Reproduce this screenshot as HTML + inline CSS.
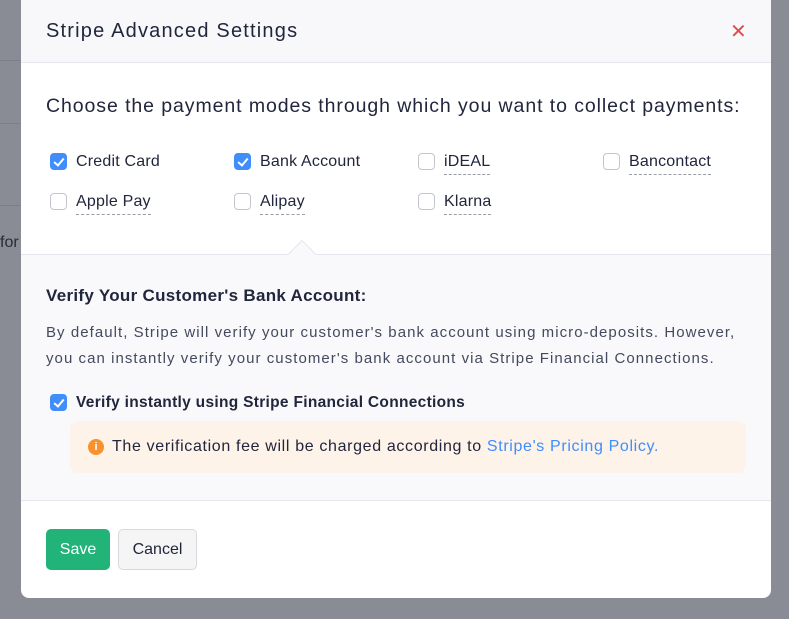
<!DOCTYPE html>
<html><head><style>
*{box-sizing:border-box;margin:0;padding:0}
body{width:789px;height:619px;background:#8a8c95;font-family:"Liberation Sans",sans-serif;position:relative;overflow:hidden;color:#21263c}
.bgl{position:absolute;left:0;width:21px;height:1px;background:#7d7f88}
.modal{position:absolute;left:21px;top:-8px;width:750px;height:606px;background:#fff;border-radius:8px;overflow:hidden}
.hdr{height:71px;background:#f8f8fb;border-bottom:1px solid #e6e7ee;position:relative}
.hdr h1{position:absolute;left:25px;top:28px;font-size:20px;font-weight:normal;color:#21263c;letter-spacing:1.2px}
.x{position:absolute;left:709px;top:27px;color:#e54b4b;font-size:20px}
.q{position:absolute;left:25px;top:103px;font-size:19.5px;letter-spacing:0.92px}
.opt{position:absolute;font-size:16px;height:22px;letter-spacing:0.2px}
.cb{position:absolute;left:0;top:0px;width:17px;height:17px;border:1px solid #c4c6cf;border-radius:4px;background:#fff}
.cb.on{background:#408dfb;border-color:#408dfb}
.cb.on:after{content:"";position:absolute;left:5px;top:2px;width:4px;height:8px;border:solid #fff;border-width:0 2px 2px 0;transform:rotate(40deg)}
.lbl{position:absolute;left:26px;top:0;white-space:nowrap}
.dash{border-bottom:1px dashed #9a9ca6;padding-bottom:3px}
.sec{position:absolute;left:0;top:262px;width:750px;height:247px;background:#f9f9fb;border-top:1px solid #e6e7ee;border-bottom:1px solid #e6e7ee}
.arrow{position:absolute;left:271px;top:-11px;width:20px;height:20px;background:#f9f9fb;border-left:1px solid #e6e7ee;border-top:1px solid #e6e7ee;transform:rotate(45deg)}
.sec h2{position:absolute;left:25px;top:31px;font-size:17px;font-weight:bold;letter-spacing:0.3px}
.sec p{position:absolute;left:25px;top:65px;font-size:15px;line-height:26px;color:#444a5e;width:720px;letter-spacing:1.05px;white-space:nowrap}
.note{position:absolute;left:49px;top:166px;width:676px;height:52px;background:#fdf3e8;border-radius:8px;font-size:16px;letter-spacing:0.65px}
.note .i{position:absolute;left:18px;top:18px;width:16px;height:16px;border-radius:50%;background:#f7922f;color:#fff;font-size:11px;font-weight:bold;text-align:center;line-height:16px;letter-spacing:0}
.note span.t{position:absolute;left:42px;top:17px;white-space:nowrap}
.btn{position:absolute;top:537px;height:41px;border-radius:5px;font-size:16px;line-height:41px;text-align:center}
</style></head><body>
<div class="bgl" style="top:60px"></div><div class="bgl" style="top:123px"></div><div class="bgl" style="top:205px"></div>
<div style="position:absolute;left:0;top:234px;font-size:16px;color:#2a2c33">for</div>
<div class="modal">
<div class="hdr"><h1>Stripe Advanced Settings</h1><div class="x">✕</div></div>
<div class="q">Choose the payment modes through which you want to collect payments:</div>
<div class="opt" style="left:29px;top:161px"><div class="cb on"></div><div class="lbl">Credit Card</div></div>
<div class="opt" style="left:213px;top:161px"><div class="cb on"></div><div class="lbl">Bank Account</div></div>
<div class="opt" style="left:397px;top:161px"><div class="cb"></div><div class="lbl dash">iDEAL</div></div>
<div class="opt" style="left:582px;top:161px"><div class="cb"></div><div class="lbl dash">Bancontact</div></div>
<div class="opt" style="left:29px;top:201px"><div class="cb"></div><div class="lbl dash">Apple Pay</div></div>
<div class="opt" style="left:213px;top:201px"><div class="cb"></div><div class="lbl dash">Alipay</div></div>
<div class="opt" style="left:397px;top:201px"><div class="cb"></div><div class="lbl dash">Klarna</div></div>
<div class="sec"><div class="arrow"></div>
<h2>Verify Your Customer's Bank Account:</h2>
<p>By default, Stripe will verify your customer's bank account using micro-deposits. However,<br>you can instantly verify your customer's bank account via Stripe Financial Connections.</p>
<div class="opt" style="left:29px;top:139px;font-weight:bold"><div class="cb on"></div><div class="lbl" style="font-size:15.5px;letter-spacing:0.3px">Verify instantly using Stripe Financial Connections</div></div>
<div class="note"><div class="i">i</div><span class="t">The verification fee will be charged according to <span style="color:#408dfb">Stripe's Pricing Policy.</span></span></div>
</div>
<div class="btn" style="left:25px;width:64px;background:#22b378;color:#fff">Save</div>
<div class="btn" style="left:97px;width:79px;background:#f5f5f5;border:1px solid #d8d9de;color:#21263c;line-height:39px">Cancel</div>
</div>
</body></html>
